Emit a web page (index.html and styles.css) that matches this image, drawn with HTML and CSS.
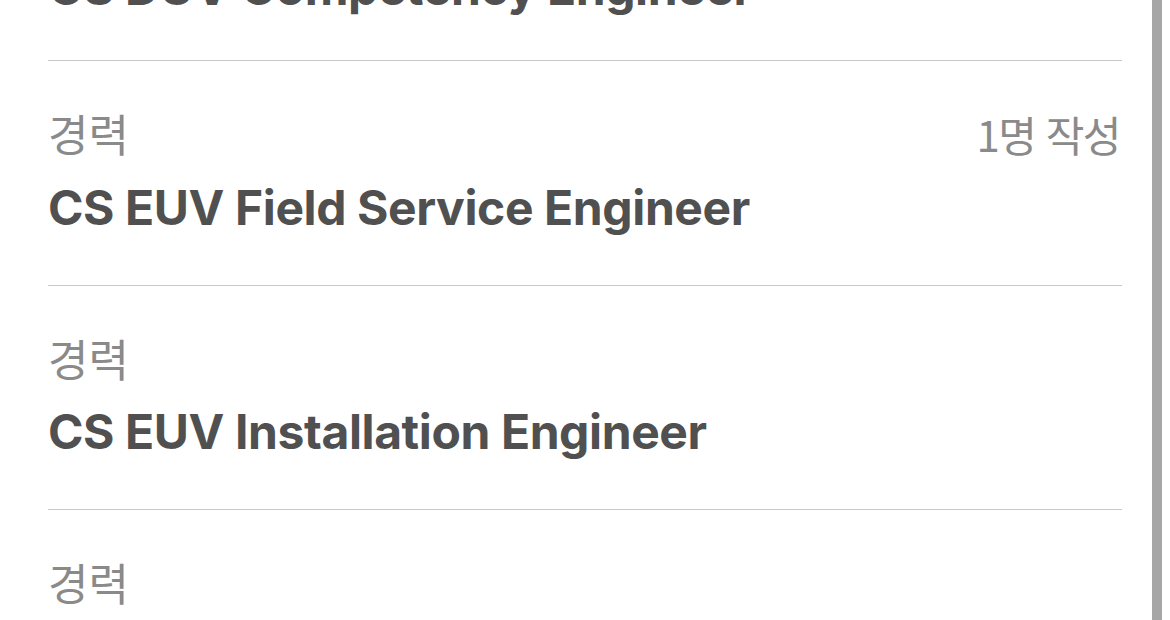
FILE: index.html
```html
<!DOCTYPE html>
<html lang="ko">
<head>
  <meta charset="UTF-8">
  <meta name="viewport" content="width=device-width, initial-scale=1.0">
  <title>직무 목록</title>
  <link rel="stylesheet" href="styles.css">
</head>
<body>
  <main class="job-list">
    <div class="job job-cut">
      <p class="job-title">CS DUV Competency Engineer</p>
    </div>

    <div class="job">
      <div class="job-head">
        <span class="job-type">경력</span>
        <span class="job-count">1명 작성</span>
      </div>
      <p class="job-title">CS EUV Field Service Engineer</p>
    </div>

    <div class="job">
      <div class="job-head">
        <span class="job-type">경력</span>
      </div>
      <p class="job-title">CS EUV Installation Engineer</p>
    </div>

    <div class="job">
      <div class="job-head">
        <span class="job-type">경력</span>
      </div>
      <p class="job-title">CS EUV Process Engineer</p>
    </div>
  </main>

  <div class="scroll-bar"></div>
</body>
</html>
```

FILE: styles.css
```css
html, body {
  margin: 0;
  height: 100%;
  overflow: hidden;
  background: #fff;
}
body {
  font-family: Inter, "Noto Sans CJK KR", sans-serif;
  color: #505050;
}
.job-list {
  padding: 0 48px;
  margin-top: -40px;
}
.job {
  border-bottom: 1px solid #c8c8c8;
  padding: 42px 0 49px;
}
.job-cut {
  padding: 0 0 44px;
}
.job-head {
  display: flex;
  justify-content: space-between;
  align-items: baseline;
}
.job-type {
  font-family: "Noto Sans CJK KR", sans-serif;
  font-size: 44px;
  line-height: 60px;
  color: #8a8a8a;
}
.job-count {
  font-family: "Noto Sans CJK KR", sans-serif;
  font-size: 42px;
  line-height: 60px;
  letter-spacing: -1.5px;
  color: #8a8a8a;
  margin-right: 2px;
}
.job-title {
  margin: 16px 0 0;
  font-size: 48px;
  line-height: 56px;
  font-weight: 700;
  letter-spacing: -0.4px;
}
.job-cut .job-title {
  margin-top: 0;
}
.scroll-bar {
  position: absolute;
  top: 0;
  right: 8px;
  width: 10px;
  height: 100%;
  background: #a6a6a6;
}
```
